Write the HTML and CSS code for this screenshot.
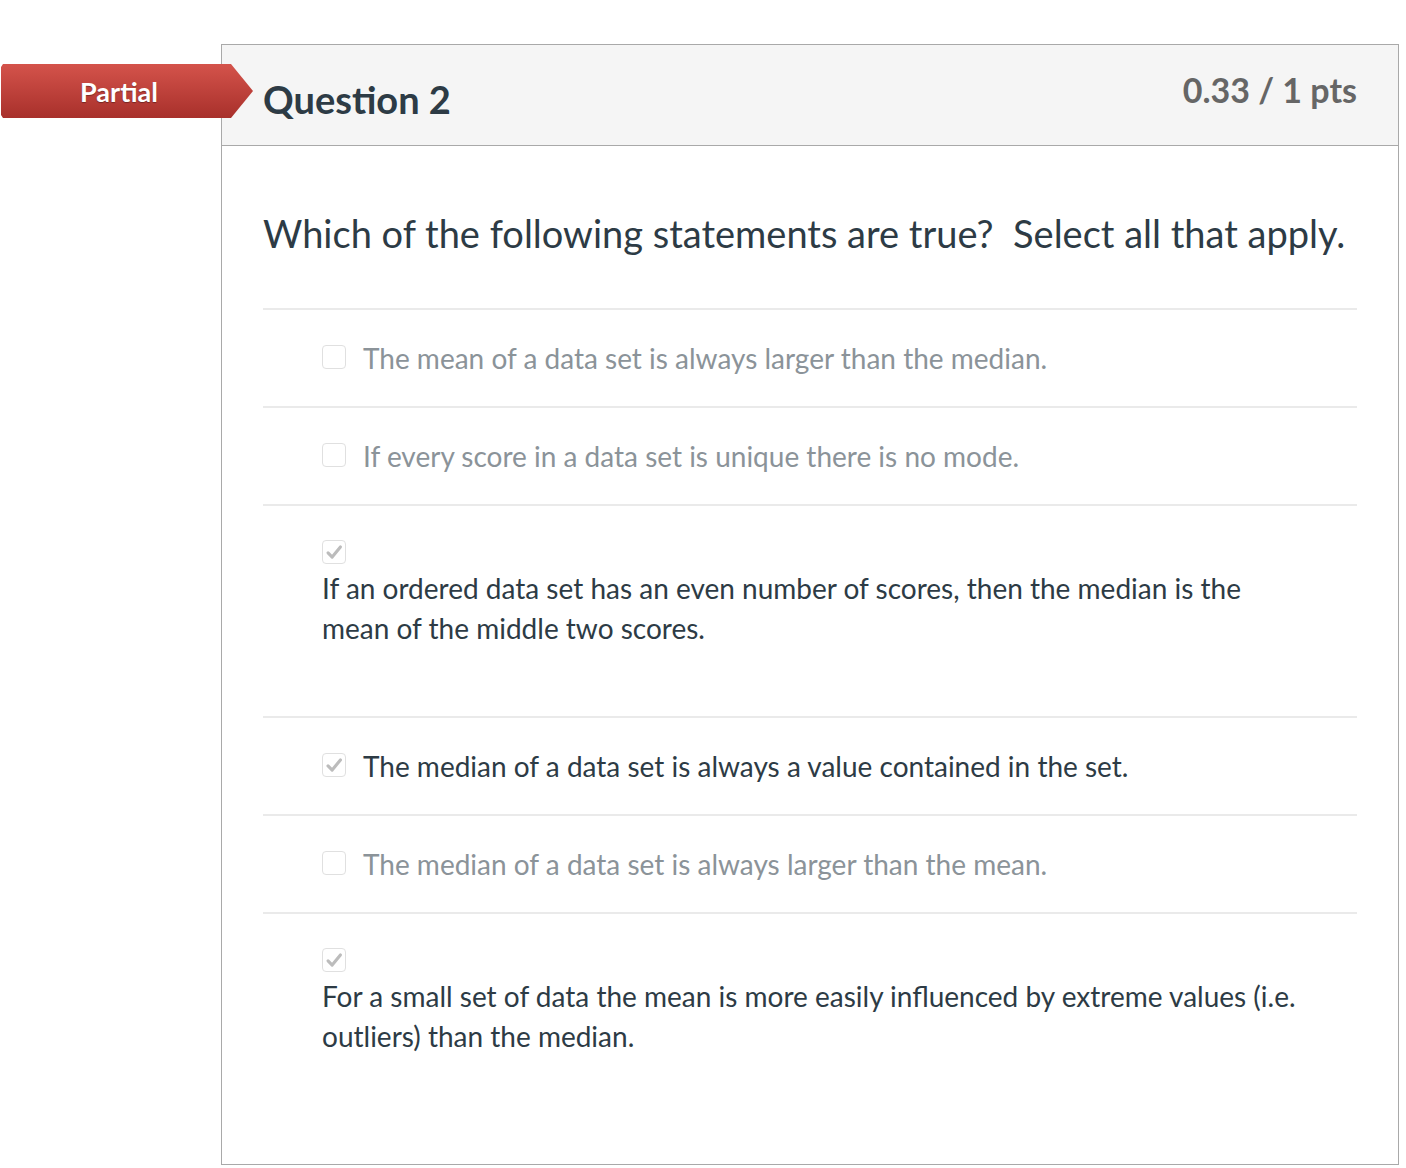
FILE: index.html
```html
<!DOCTYPE html>
<html>
<head>
<meta charset="utf-8">
<link rel="stylesheet" href="styles.css">
</head>
<body>
<div class="page">
  <div class="badge"><span>Partial</span></div>
  <div class="card">
    <div class="card-header">
      <h2 class="title">Question 2</h2>
      <div class="pts">0.33 / 1 pts</div>
    </div>
    <div class="card-body">
      <p class="question">Which of the following statements are true?&nbsp; Select all that apply.</p>
      <div class="answers">
        <div class="answer inline">
          <span class="cb"></span>
          <span class="txt muted">The mean of a data set is always larger than the median.</span>
        </div>
        <div class="answer inline">
          <span class="cb"></span>
          <span class="txt muted">If every score in a data set is unique there is no mode.</span>
        </div>
        <div class="answer block tall">
          <span class="cb checked"><svg viewBox="0 0 24 24" width="22" height="22"><path d="M5.5 13 L10 17.5 L19 6.5" fill="none" stroke="#bcbcbc" stroke-width="3.4" stroke-linecap="round" stroke-linejoin="round"/></svg></span>
          <span class="txt">If an ordered data set has an even number of scores, then the median is the mean of the middle two scores.</span>
        </div>
        <div class="answer inline">
          <span class="cb checked"><svg viewBox="0 0 24 24" width="22" height="22"><path d="M5.5 13 L10 17.5 L19 6.5" fill="none" stroke="#bcbcbc" stroke-width="3.4" stroke-linecap="round" stroke-linejoin="round"/></svg></span>
          <span class="txt">The median of a data set is always a value contained in the set.</span>
        </div>
        <div class="answer inline">
          <span class="cb"></span>
          <span class="txt muted">The median of a data set is always larger than the mean.</span>
        </div>
        <div class="answer block last">
          <span class="cb checked"><svg viewBox="0 0 24 24" width="22" height="22"><path d="M5.5 13 L10 17.5 L19 6.5" fill="none" stroke="#bcbcbc" stroke-width="3.4" stroke-linecap="round" stroke-linejoin="round"/></svg></span>
          <span class="txt">For a small set of data the mean is more easily influenced by extreme values (i.e. outliers) than the median.</span>
        </div>
      </div>
    </div>
  </div>
</div>
</body>
</html>
```

FILE: styles.css
```css
html, body {
  margin: 0;
  padding: 0;
  background: #ffffff;
  font-family: Lato, "Open Sans", "Liberation Sans", sans-serif;
  color: #2d3b45;
}
.page {
  position: relative;
  padding: 44px 0 0 221px;
}
.badge {
  position: absolute;
  left: 1px;
  top: 64px;
  width: 252px;
  height: 54px;
  background: linear-gradient(#d4534b, #a8302b);
  clip-path: polygon(0 3px, 2px 0, 230px 0, 252px 27px, 230px 54px, 2px 54px, 0 51px);
  color: #ffffff;
  font-size: 27px;
  font-weight: 700;
  display: flex;
  align-items: center;
  z-index: 2;
}
.badge span {
  width: 236px;
  text-align: center;
  text-shadow: 0 1px 1px rgba(0,0,0,0.35);
}
.card {
  width: 1176px;
  height: 1119px;
  border: 1px solid #a9a9a9;
  background: #fff;
}
.card-header {
  height: 100px;
  background: #f5f5f5;
  border-bottom: 1px solid #a9a9a9;
  display: flex;
  justify-content: space-between;
  align-items: flex-start;
  padding: 0 41px;
}
.title {
  margin: 30px 0 0 0;
  font-size: 38px;
  font-weight: 700;
  line-height: 48px;
  color: #2d3b45;
}
.pts {
  margin-top: 25px;
  font-size: 34px;
  font-weight: 700;
  line-height: 40px;
  color: #666666;
}
.card-body {
  padding: 0 41px;
}
.question {
  margin: 0;
  padding: 63px 0 51px;
  font-size: 38px;
  line-height: 48px;
  color: #2d3b45;
}
.answers {
  border-top: 2px solid #eaeaea;
}
.answer {
  border-bottom: 2px solid #eaeaea;
  padding: 0 55px 0 59px;
}
.answer.inline {
  height: 96px;
  display: flex;
  align-items: center;
  gap: 17px;
}
.answer.block {
  padding-top: 36px;
  display: flex;
  flex-direction: column;
  align-items: flex-start;
}
.answer.tall {
  height: 174px;
}
.answer.last {
  border-bottom: none;
}
.cb {
  width: 22px;
  height: 22px;
  border: 1px solid #e0e0e0;
  border-radius: 4px;
  flex: none;
  display: flex;
  align-items: center;
  justify-content: center;
  margin-top: -2px;
}
.cb svg {
  display: block;
}
.txt {
  font-size: 28px;
  line-height: 40px;
  color: #2d3b45;
}
.block .txt {
  margin-top: 4px;
}
.txt.muted {
  color: #8b9399;
}
```
